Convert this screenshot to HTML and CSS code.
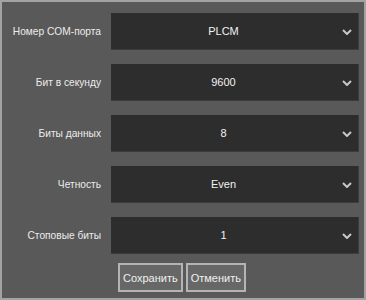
FILE: index.html
```html
<!DOCTYPE html>
<html lang="ru">
<head>
    <meta charset="UTF-8">
    <title>Настройки порта</title>
    <link rel="stylesheet" href="styles.css">
</head>
<body>
    <!-- Port settings form -->
    <div class="panel">
        <form class="port-form">
            <label class="field-label" for="portName">Номер COM-порта</label>
            <div class="select-box">
                <span class="select-value">PLCM</span>
                <svg class="chevron" width="10" height="6" viewBox="0 0 10 6"><polyline points="1,1 5,5 9,1" /></svg>
            </div>

            <label class="field-label" for="baudRate">Бит в секунду</label>
            <div class="select-box">
                <span class="select-value">9600</span>
                <svg class="chevron" width="10" height="6" viewBox="0 0 10 6"><polyline points="1,1 5,5 9,1" /></svg>
            </div>

            <label class="field-label" for="dataBits">Биты данных</label>
            <div class="select-box">
                <span class="select-value">8</span>
                <svg class="chevron" width="10" height="6" viewBox="0 0 10 6"><polyline points="1,1 5,5 9,1" /></svg>
            </div>

            <label class="field-label" for="parity">Четность</label>
            <div class="select-box">
                <span class="select-value">Even</span>
                <svg class="chevron" width="10" height="6" viewBox="0 0 10 6"><polyline points="1,1 5,5 9,1" /></svg>
            </div>

            <label class="field-label" for="stopBits">Стоповые биты</label>
            <div class="select-box">
                <span class="select-value">1</span>
                <svg class="chevron" width="10" height="6" viewBox="0 0 10 6"><polyline points="1,1 5,5 9,1" /></svg>
            </div>
        </form>
        <!-- Actions -->
        <div class="actions">
            <button type="button" class="btn">Сохранить</button>
            <button type="button" class="btn">Отменить</button>
        </div>
    </div>
</body>
</html>
```

FILE: styles.css
```css
body {
    margin: 0;
    font-family: "Liberation Sans", Arial, sans-serif;
    font-size: 11px;
}
.panel {
    box-sizing: border-box;
    width: 366px;
    height: 300px;
    background-color: #595959;
    border: 2px solid #a3a3a3;
    padding: 11px 5px 0 0;
}
.port-form {
    display: grid;
    grid-template-columns: 99px 1fr;
    column-gap: 10px;
    row-gap: 14px;
    align-items: center;
}
.field-label {
    text-align: right;
    color: #ececec;
    font-size: 10.2px;
}
.select-box {
    position: relative;
    height: 37px;
    background-color: #2d2d2d;
    border-right: 1px solid #3c3c3c;
    border-bottom: 1px solid #3c3c3c;
    box-sizing: border-box;
    display: flex;
    align-items: center;
    justify-content: center;
    padding-right: 22px;
    color: #f2f2f2;
}
.chevron {
    position: absolute;
    right: 6px;
    top: 16px;
}
.chevron polyline {
    fill: none;
    stroke: #c8c8c8;
    stroke-width: 2;
}
.actions {
    display: flex;
    gap: 3px;
    padding-left: 116px;
    margin-top: 9px;
}
.btn {
    height: 29px;
    padding: 0 3px;
    background-color: #676767;
    border: 2px solid #b4b4b4;
    color: #f0f0f0;
    font-family: "Liberation Sans", Arial, sans-serif;
    font-size: 11px;
    cursor: pointer;
}
```
